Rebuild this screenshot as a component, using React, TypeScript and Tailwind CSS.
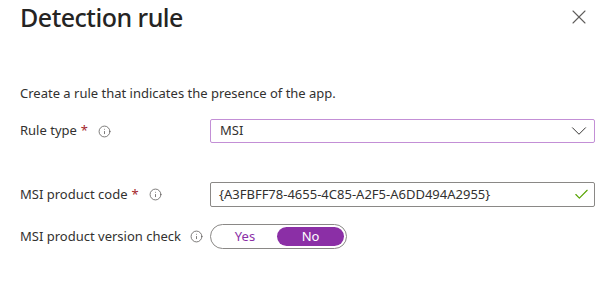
import { X, ChevronDown, Check, Info } from 'lucide-react';

const font = { fontFamily: '"Noto Sans", "Open Sans", sans-serif' };

function Label({ text, required }: { text: string; required?: boolean }) {
  return (
    <div className="flex w-[190px] shrink-0 items-center text-[13px] text-[#323130]">
      <span>{text}</span>
      {required && <span className="ml-[4px] text-[#a4262c]">*</span>}
      <Info className="ml-[10px] h-[13px] w-[13px] text-[#605e5c]" strokeWidth={1.5} />
    </div>
  );
}

export default function App() {
  return (
    <div className="h-[304px] w-[605px] overflow-hidden bg-white text-[#323130]" style={font}>
      {/* Header */}
      <div className="flex items-start justify-between pl-[20px] pr-[14px] pt-[1px]">
        <h1 className="text-[25px] font-medium leading-[33px] tracking-[-0.5px] text-[#252423]">Detection rule</h1>
        <X className="mt-[4px] h-[24px] w-[24px] text-[#605e5c]" strokeWidth={1.1} />
      </div>

      <div className="pl-[20px] pr-[10px]">
        <p className="mt-[49px] text-[13px] leading-[20px]">Create a rule that indicates the presence of the app.</p>

        {/* Rule type */}
        <div className="mt-[16px] flex items-center">
          <Label text="Rule type" required />
          <div className="flex h-[24px] flex-1 items-center justify-between rounded-[2px] border border-[#c38fd6] pl-[9px] pr-[2px] text-[13px]">
            <span>MSI</span>
            <ChevronDown className="h-[26px] w-[26px] text-[#323130]" strokeWidth={0.9} />
          </div>
        </div>

        {/* Product code */}
        <div className="mt-[39px] flex items-center">
          <Label text="MSI product code" required />
          <div className="flex h-[25px] flex-1 items-center justify-between rounded-[2px] border border-[#8a8886] pl-[8px] pr-[4px] text-[13px]">
            <span>{'{A3FBFF78-4655-4C85-A2F5-A6DD494A2955}'}</span>
            <Check className="h-[17px] w-[17px] text-[#57a300]" strokeWidth={1.6} />
          </div>
        </div>

        {/* Version check */}
        <div className="mt-[17px] flex items-center">
          <div className="flex w-[190px] shrink-0 items-center text-[13px] text-[#323130]">
            <span>MSI product version check</span>
            <Info className="ml-[9px] h-[13px] w-[13px] text-[#605e5c]" strokeWidth={1.5} />
          </div>
          <div className="flex h-[25px] w-[137px] items-center rounded-full border border-[#8a8886] p-[2px] text-[13px]">
            <div className="flex flex-1 items-center justify-center text-[#8b2fa6]">Yes</div>
            <div className="flex h-[19px] w-[67px] items-center justify-center rounded-full bg-[#8b2fa6] text-white">No</div>
          </div>
        </div>
      </div>
    </div>
  );
}
